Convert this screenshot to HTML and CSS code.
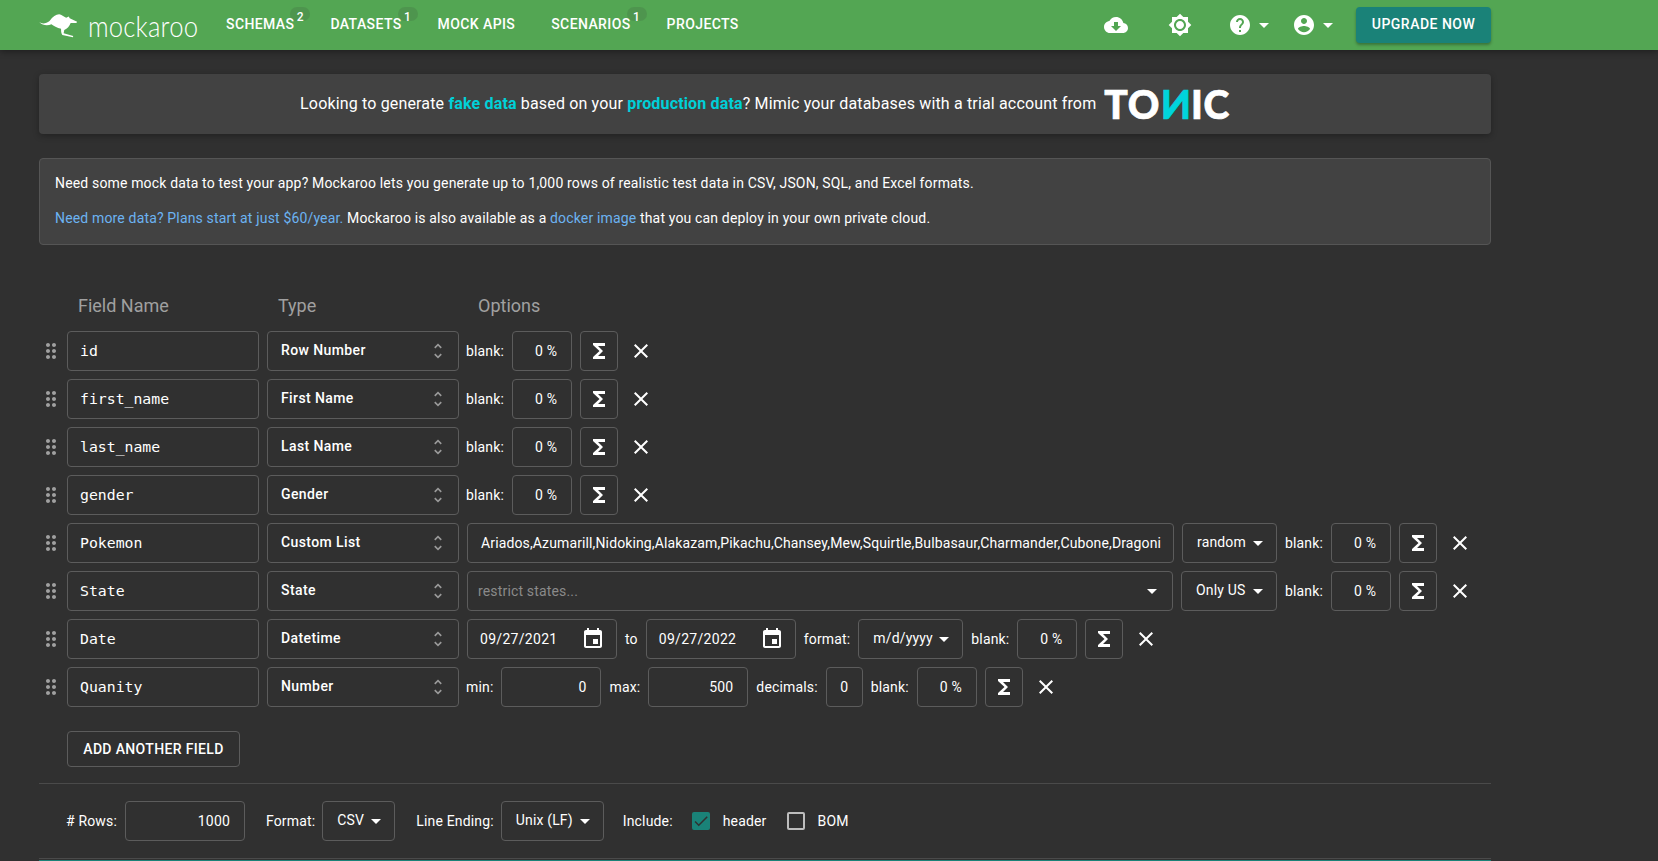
FILE: index.html
```html
<!DOCTYPE html>
<html lang="en">
<head>
<meta charset="utf-8">
<title>Mockaroo</title>
<link rel="stylesheet" href="styles.css">
</head>
<body>
<svg class="sprite" aria-hidden="true">
  <symbol id="i-cloud" viewBox="0 0 24 24"><path d="M19.35 10.04C18.67 6.59 15.64 4 12 4 9.11 4 6.6 5.64 5.35 8.04 2.34 8.36 0 10.91 0 14c0 3.31 2.69 6 6 6h13c2.76 0 5-2.24 5-5 0-2.64-2.05-4.78-4.65-4.96zM17 13l-5 5-5-5h3V9h4v4h3z"/></symbol>
  <symbol id="i-sun" viewBox="0 0 24 24"><path d="M20 8.69V4h-4.69L12 .69 8.69 4H4v4.69L.69 12 4 15.31V20h4.69L12 23.31 15.31 20H20v-4.69L23.31 12 20 8.69zM12 18c-3.31 0-6-2.69-6-6s2.69-6 6-6 6 2.69 6 6-2.69 6-6 6zm0-10c-2.21 0-4 1.79-4 4s1.79 4 4 4 4-1.79 4-4-1.79-4-4-4z"/></symbol>
  <symbol id="i-help" viewBox="0 0 24 24"><path d="M12 2C6.48 2 2 6.48 2 12s4.48 10 10 10 10-4.48 10-10S17.52 2 12 2zm1 17h-2v-2h2v2zm2.07-7.75l-.9.92C13.45 12.9 13 13.5 13 15h-2v-.5c0-1.1.45-2.1 1.17-2.83l1.24-1.26c.37-.36.59-.86.59-1.41 0-1.1-.9-2-2-2s-2 .9-2 2H8c0-2.21 1.79-4 4-4s4 1.79 4 4c0 .88-.36 1.68-.93 2.25z"/></symbol>
  <symbol id="i-account" viewBox="0 0 24 24"><path d="M12 2C6.48 2 2 6.48 2 12s4.48 10 10 10 10-4.48 10-10S17.52 2 12 2zm0 3c1.66 0 3 1.34 3 3s-1.34 3-3 3-3-1.34-3-3 1.34-3 3-3zm0 14.2c-2.5 0-4.71-1.28-6-3.22.03-1.99 4-3.08 6-3.08 1.99 0 5.97 1.09 6 3.08-1.29 1.94-3.5 3.22-6 3.22z"/></symbol>
  <symbol id="i-event" viewBox="0 0 24 24"><path d="M17 12h-5v5h5v-5zM16 1v2H8V1H6v2H5c-1.11 0-1.99.9-1.99 2L3 19c0 1.1.89 2 2 2h14c1.1 0 2-.9 2-2V5c0-1.1-.9-2-2-2h-1V1h-2zm3 18H5V8h14v11z"/></symbol>
  <symbol id="i-sigma" viewBox="0 0 24 24"><path d="M18 4H6v2l6.5 6L6 18v2h12v-3h-7l5-5-5-5h7z"/></symbol>
  <symbol id="i-close" viewBox="0 0 24 24"><path d="M19 6.41L17.59 5 12 10.59 6.41 5 5 6.41 10.59 12 5 17.59 6.41 19 12 13.41 17.59 19 19 17.59 13.41 12z"/></symbol>
  <symbol id="i-drag" viewBox="0 0 24 24"><path d="M11 18c0 1.1-.9 2-2 2s-2-.9-2-2 .9-2 2-2 2 .9 2 2zm-2-8c-1.1 0-2 .9-2 2s.9 2 2 2 2-.9 2-2-.9-2-2-2zm0-6c-1.1 0-2 .9-2 2s.9 2 2 2 2-.9 2-2-.9-2-2-2zm6 4c1.1 0 2-.9 2-2s-.9-2-2-2-2 .9-2 2 .9 2 2 2zm0 2c-1.1 0-2 .9-2 2s.9 2 2 2 2-.9 2-2-.9-2-2-2zm0 6c-1.1 0-2 .9-2 2s.9 2 2 2 2-.9 2-2-.9-2-2-2z"/></symbol>
  <symbol id="i-updown" viewBox="0 0 24 24"><path d="M12 5.83L15.17 9l1.41-1.41L12 3 7.41 7.59 8.83 9 12 5.83zm0 12.34L8.83 15l-1.41 1.41L12 21l4.59-4.59L15.17 15 12 18.17z"/></symbol>
  <symbol id="i-check" viewBox="0 0 24 24"><path d="M9 16.17L4.83 12l-1.42 1.41L9 19 21 7l-1.41-1.41z"/></symbol>
</svg>

<header class="topbar">
  <a class="logo">
    <svg class="roo" viewBox="0 0 120 75"><path d="M0 26C10 32 22 30 32 22 42 8 52 2 62 1 70 2 76 8 84 12L92 8 95 13 118 24 116 28 98 28C94 38 88 46 78 50L76 60 106 69 105 73 72 66C68 60 68 52 68 46 56 44 44 36 38 32 26 38 10 36 0 26Z"/></svg>
    <span class="wordmark">mockaroo</span>
  </a>
  <nav class="nav">
    <a class="nav-item">SCHEMAS<span class="badge">2</span></a>
    <a class="nav-item">DATASETS<span class="badge">1</span></a>
    <a class="nav-item">MOCK APIS</a>
    <a class="nav-item">SCENARIOS<span class="badge">1</span></a>
    <a class="nav-item">PROJECTS</a>
  </nav>
  <div class="actions">
    <svg class="ico cloud"><use href="#i-cloud"/></svg>
    <svg class="ico sun"><use href="#i-sun"/></svg>
    <svg class="ico help"><use href="#i-help"/></svg>
    <span class="caret top-caret"></span>
    <svg class="ico account"><use href="#i-account"/></svg>
    <span class="caret top-caret"></span>
    <a class="upgrade">UPGRADE NOW</a>
  </div>
</header>

<main class="page">
  <section class="banner">
    <span>Looking to generate <b>fake data</b> based on your <b>production data</b>? Mimic your databases with a trial account from</span>
    <span class="tonic">TO<span class="tonic-n">N</span>IC</span>
  </section>

  <section class="info">
    <p>Need some mock data to test your app? Mockaroo lets you generate up to 1,000 rows of realistic test data in CSV, JSON, SQL, and Excel formats.</p>
    <p><a class="link">Need more data? Plans start at just $60/year.</a> Mockaroo is also available as a <a class="link">docker image</a> that you can deploy in your own private cloud.</p>
  </section>

  <div class="heads">
    <span class="head">Field Name</span>
    <span class="head">Type</span>
    <span class="head">Options</span>
  </div>

  <div class="row">
    <svg class="drag"><use href="#i-drag"/></svg>
    <div class="box name">id</div>
    <div class="box type">Row Number<svg class="updown"><use href="#i-updown"/></svg></div>
    <div class="opts">
      <span class="lbl">blank:</span><div class="box num pct">0 %</div>
      <div class="box sigma"><svg class="ico"><use href="#i-sigma"/></svg></div>
      <svg class="ico del"><use href="#i-close"/></svg>
    </div>
  </div>
  <div class="row">
    <svg class="drag"><use href="#i-drag"/></svg>
    <div class="box name">first_name</div>
    <div class="box type">First Name<svg class="updown"><use href="#i-updown"/></svg></div>
    <div class="opts">
      <span class="lbl">blank:</span><div class="box num pct">0 %</div>
      <div class="box sigma"><svg class="ico"><use href="#i-sigma"/></svg></div>
      <svg class="ico del"><use href="#i-close"/></svg>
    </div>
  </div>
  <div class="row">
    <svg class="drag"><use href="#i-drag"/></svg>
    <div class="box name">last_name</div>
    <div class="box type">Last Name<svg class="updown"><use href="#i-updown"/></svg></div>
    <div class="opts">
      <span class="lbl">blank:</span><div class="box num pct">0 %</div>
      <div class="box sigma"><svg class="ico"><use href="#i-sigma"/></svg></div>
      <svg class="ico del"><use href="#i-close"/></svg>
    </div>
  </div>
  <div class="row">
    <svg class="drag"><use href="#i-drag"/></svg>
    <div class="box name">gender</div>
    <div class="box type">Gender<svg class="updown"><use href="#i-updown"/></svg></div>
    <div class="opts">
      <span class="lbl">blank:</span><div class="box num pct">0 %</div>
      <div class="box sigma"><svg class="ico"><use href="#i-sigma"/></svg></div>
      <svg class="ico del"><use href="#i-close"/></svg>
    </div>
  </div>
  <div class="row">
    <svg class="drag"><use href="#i-drag"/></svg>
    <div class="box name">Pokemon</div>
    <div class="box type">Custom List<svg class="updown"><use href="#i-updown"/></svg></div>
    <div class="opts">
      <div class="box list">Ariados,Azumarill,Nidoking,Alakazam,Pikachu,Chansey,Mew,Squirtle,Bulbasaur,Charmander,Cubone,Dragoni</div>
      <div class="box sel w-95">random<span class="caret"></span></div>
      <span class="lbl">blank:</span><div class="box num pct">0 %</div>
      <div class="box sigma"><svg class="ico"><use href="#i-sigma"/></svg></div>
      <svg class="ico del"><use href="#i-close"/></svg>
    </div>
  </div>
  <div class="row">
    <svg class="drag"><use href="#i-drag"/></svg>
    <div class="box name">State</div>
    <div class="box type">State<svg class="updown"><use href="#i-updown"/></svg></div>
    <div class="opts">
      <div class="box restrict"><span class="placeholder">restrict states...</span><span class="caret"></span></div>
      <div class="box sel w-96">Only US<span class="caret"></span></div>
      <span class="lbl">blank:</span><div class="box num pct">0 %</div>
      <div class="box sigma"><svg class="ico"><use href="#i-sigma"/></svg></div>
      <svg class="ico del"><use href="#i-close"/></svg>
    </div>
  </div>
  <div class="row">
    <svg class="drag"><use href="#i-drag"/></svg>
    <div class="box name">Date</div>
    <div class="box type">Datetime<svg class="updown"><use href="#i-updown"/></svg></div>
    <div class="opts">
      <div class="box date">09/27/2021<svg class="ico"><use href="#i-event"/></svg></div>
      <span class="lbl">to</span>
      <div class="box date">09/27/2022<svg class="ico"><use href="#i-event"/></svg></div>
      <span class="lbl">format:</span>
      <div class="box sel w-105">m/d/yyyy<span class="caret"></span></div>
      <span class="lbl">blank:</span><div class="box num pct">0 %</div>
      <div class="box sigma"><svg class="ico"><use href="#i-sigma"/></svg></div>
      <svg class="ico del"><use href="#i-close"/></svg>
    </div>
  </div>
  <div class="row">
    <svg class="drag"><use href="#i-drag"/></svg>
    <div class="box name">Quanity</div>
    <div class="box type">Number<svg class="updown"><use href="#i-updown"/></svg></div>
    <div class="opts">
      <span class="lbl">min:</span><div class="box num w-100">0</div>
      <span class="lbl">max:</span><div class="box num w-100">500</div>
      <span class="lbl">decimals:</span><div class="box num dec">0</div>
      <span class="lbl">blank:</span><div class="box num pct">0 %</div>
      <div class="box sigma"><svg class="ico"><use href="#i-sigma"/></svg></div>
      <svg class="ico del"><use href="#i-close"/></svg>
    </div>
  </div>

  <a class="box add">ADD ANOTHER FIELD</a>

  <div class="settings">
    <span class="lbl">&#35; Rows:</span><div class="box num rows">1000</div>
    <span class="lbl group">Format:</span><div class="box sel w-73">CSV<span class="caret"></span></div>
    <span class="lbl group">Line Ending:</span><div class="box sel w-103">Unix (LF)<span class="caret"></span></div>
    <span class="lbl group group-tight">Include:</span>
    <span class="check on"><svg class="tick"><use href="#i-check"/></svg></span><span class="lbl check-lbl">header</span>
    <span class="check"></span><span class="lbl check-lbl">BOM</span>
  </div>
  <div class="cta-edge"></div>
</main>
</body>
</html>
```

FILE: styles.css
```css
* { box-sizing: border-box; }
html, body { height: 100%; }
body {
  margin: 0;
  overflow: hidden;
  background: #303030;
  color: #fff;
  font: 400 14px/20px Roboto, "Liberation Sans", sans-serif;
  letter-spacing: .16px;
}
.sprite { display: none; }
svg { fill: currentColor; flex: none; display: block; }
.ico { width: 24px; height: 24px; }

/* top bar */
.topbar {
  height: 50px;
  display: flex;
  align-items: center;
  padding: 0 167px 0 39px;
  background: #53a653;
  box-shadow: 0 2px 6px rgba(0, 0, 0, .35);
  position: relative;
}
.logo { width: 187px; display: flex; align-items: center; gap: 10px; }
.roo { width: 39px; height: 24px; margin-top: 2px; }
.wordmark {
  font: 300 29px/30px Lato, Roboto, sans-serif;
  letter-spacing: .2px;
  margin-top: 2px;
  transform: scaleX(.885);
  transform-origin: left center;
}
.nav { display: flex; gap: 36px; }
.nav-item {
  position: relative;
  font-weight: 500;
  letter-spacing: .4px;
  line-height: 20px;
  margin-top: -3px;
}
.badge {
  position: absolute;
  top: -7px;
  right: -16px;
  width: 20px;
  height: 14px;
  border-radius: 10px;
  background: rgba(48, 48, 48, .14);
  font-size: 12px;
  line-height: 20px;
  text-align: center;
}
.actions { margin-left: auto; display: flex; align-items: center; }
.sun { margin-left: 40px; }
.help { margin-left: 36px; }
.account { margin-left: 23px; }
.caret {
  display: block;
  flex: none;
  width: 0;
  height: 0;
  border: 5px solid transparent;
  border-top-color: currentColor;
  border-bottom: 0;
}
.top-caret { margin-left: 7px; }
.upgrade {
  margin-left: 23px;
  width: 135px;
  height: 36px;
  margin-top: -1px;
  border-radius: 4px;
  background: #1a8278;
  box-shadow: 0 2px 3px rgba(0, 0, 0, .3);
  font-weight: 500;
  letter-spacing: .48px;
  line-height: 34px;
  text-align: center;
}

/* page */
.page { width: 1452px; margin-left: 39px; }
.banner {
  margin-top: 24px;
  height: 60px;
  display: flex;
  align-items: center;
  justify-content: center;
  gap: 8px;
  border-radius: 4px;
  background: #424242;
  box-shadow: 0 2px 6px rgba(0, 0, 0, .3);
  font-size: 16px;
}
.banner b { font-weight: 700; color: #00d0d8; }
.tonic {
  font: 900 39px/44px Lato, sans-serif;
  letter-spacing: .7px;
  color: #fff;
  display: flex;
  -webkit-text-stroke: .7px currentColor;
}
.tonic-n {
  display: block;
  transform: scaleX(-1);
  color: #00d4dc;
}
.info {
  margin-top: 24px;
  height: 87px;
  padding: 14px 15px 0;
  background: #424242;
  border: 1px solid #555;
  border-radius: 4px;
}
.info p { margin: 0 0 15px; }
.link { color: #6cb3f2; }

.heads { display: flex; margin-top: 49px; margin-bottom: 13px; padding-left: 39px; letter-spacing: 0; }
.head { width: 200px; font-size: 18px; line-height: 24px; color: #a0a0a0; }

/* fields */
.box {
  height: 40px;
  flex: none;
  border: 1px solid #5c5c5c;
  border-radius: 4px;
  display: flex;
  align-items: center;
}
.row { display: flex; align-items: center; gap: 8px; height: 40px; margin-bottom: 8px; }
.drag { width: 24px; height: 24px; margin-right: -4px; color: #a0a0a0; }
.name {
  width: 192px;
  padding: 0 12px;
  letter-spacing: 0;
  font: 400 14.8px/20px "DejaVu Sans Mono", monospace;
}
.type {
  width: 192px;
  padding: 0 10px 3px 13px;
  justify-content: space-between;
  font-weight: 500;
  letter-spacing: .4px;
}
.updown { width: 20px; height: 20px; margin-top: 3px; color: #9a9a9a; }
.opts { display: flex; align-items: center; gap: 8px; }
.opts > .lbl:first-child { margin-left: -1px; }
.lbl { flex: none; padding-bottom: 1px; }
.num { justify-content: flex-end; padding: 0 14px 0 0; }
.pct { width: 60px; }
.w-100 { width: 100px; }
.dec { width: 37px; justify-content: center; padding: 0; }
.sigma { width: 38px; justify-content: center; }
.del { margin-left: 3px; }
.list { width: 707px; padding: 0 13px; white-space: nowrap; letter-spacing: .125px; }
.restrict {
  width: 706px;
  padding: 0 15px 0 10px;
  justify-content: space-between;
}
.placeholder { color: #8a8a8a; }
.sel {
  padding: 0 13px 3px 14px;
  justify-content: space-between;
}
.sel .caret { margin-top: 3px; }
.w-95 { width: 95px; }
.w-96 { width: 96px; }
.w-105 { width: 105px; }
.w-73 { width: 73px; margin-left: -1px; }
.w-103 { width: 103px; margin-left: -1px; }
.date {
  width: 150px;
  padding: 0 11px 0 12px;
  justify-content: space-between;
  letter-spacing: .3px;
}
.add {
  margin: 24px 0 16px 28px;
  width: 173px;
  height: 36px;
  justify-content: center;
  font-weight: 500;
  letter-spacing: .35px;
}

/* settings */
.settings {
  display: flex;
  align-items: center;
  gap: 8px;
  height: 76px;
  padding: 0 0 0 27px;
  border-top: 1px solid #4a4a4a;
  border-bottom: 1px solid #4a4a4a;
}
.rows { width: 120px; }
.group { margin-left: 13px; }
.group-tight { margin-left: 11px; }
.check {
  flex: none;
  width: 18px;
  height: 18px;
  margin-left: 11px;
  border: 2px solid #bdbdbd;
  border-radius: 2px;
  display: flex;
  align-items: center;
  justify-content: center;
}
.check.on { background: #1a8278; border-color: #1a8278; color: #303030; }
.tick { width: 18px; height: 18px; }
.check-lbl { margin-left: 5px; margin-right: 1px; }
.cta-edge { height: 1px; margin-top: 1px; background: #1a8278; }
```
